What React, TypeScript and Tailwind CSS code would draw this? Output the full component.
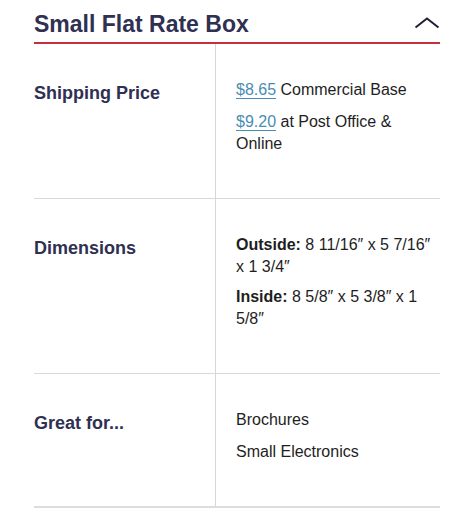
import React from "react";

const LINK = "text-[#4a8db3] underline decoration-1 underline-offset-[3px]";

function Row({
  label,
  children,
  last,
  tight,
}: {
  label: string;
  children: React.ReactNode;
  last?: boolean;
  tight?: boolean;
}) {
  return (
    <div
      className={
        "grid grid-cols-[182px_1fr] " +
        (last ? "border-b-2 border-[#dcdcdc]" : "border-b border-[#d9d9d9]")
      }
    >
      <div className="border-r border-[#d6d6d6] pt-[38px] pb-[43px] text-[18px] font-bold leading-[22px] text-[#2f3052]">
        {label}
      </div>
      <div
        className={
          "flex flex-col pt-[35px] pb-[43px] pl-5 text-[16px] leading-[22px] text-[#1e1e1e] " +
          (tight ? "gap-[8px]" : "gap-[10px]")
        }
      >
        {children}
      </div>
    </div>
  );
}

export default function App() {
  return (
    <div
      className="min-h-[517px] w-[474px] bg-white"
      style={{ fontFamily: '"Liberation Sans", Arial, sans-serif' }}
    >
      <div className="ml-[34px] w-[406px]">
        <div className="flex items-start justify-between border-b-2 border-[#c4313d] pt-[10px] pb-[4px]">
          <h1 className="text-[23px] font-bold leading-[28px] text-[#2f3052]">
            Small Flat Rate Box
          </h1>
          <svg width="26" height="12" viewBox="0 0 26 12" className="mt-[7px]">
            <polyline
              points="1.5,10.5 13,1.5 24.5,10.5"
              fill="none"
              stroke="#1f2033"
              strokeWidth="2"
            />
          </svg>
        </div>

        <Row label="Shipping Price">
          <p>
            <span className={LINK}>$8.65</span> Commercial Base
          </p>
          <p>
            <span className={LINK}>$9.20</span> at Post Office &amp; Online
          </p>
        </Row>

        <Row label="Dimensions" tight>
          <p>
            <b>Outside:</b> 8 11/16″ x 5 7/16″ x 1 3/4″
          </p>
          <p>
            <b>Inside:</b> 8 5/8″ x 5 3/8″ x 1 5/8″
          </p>
        </Row>

        <Row label="Great for..." last>
          <p>Brochures</p>
          <p>Small Electronics</p>
        </Row>
      </div>
    </div>
  );
}
